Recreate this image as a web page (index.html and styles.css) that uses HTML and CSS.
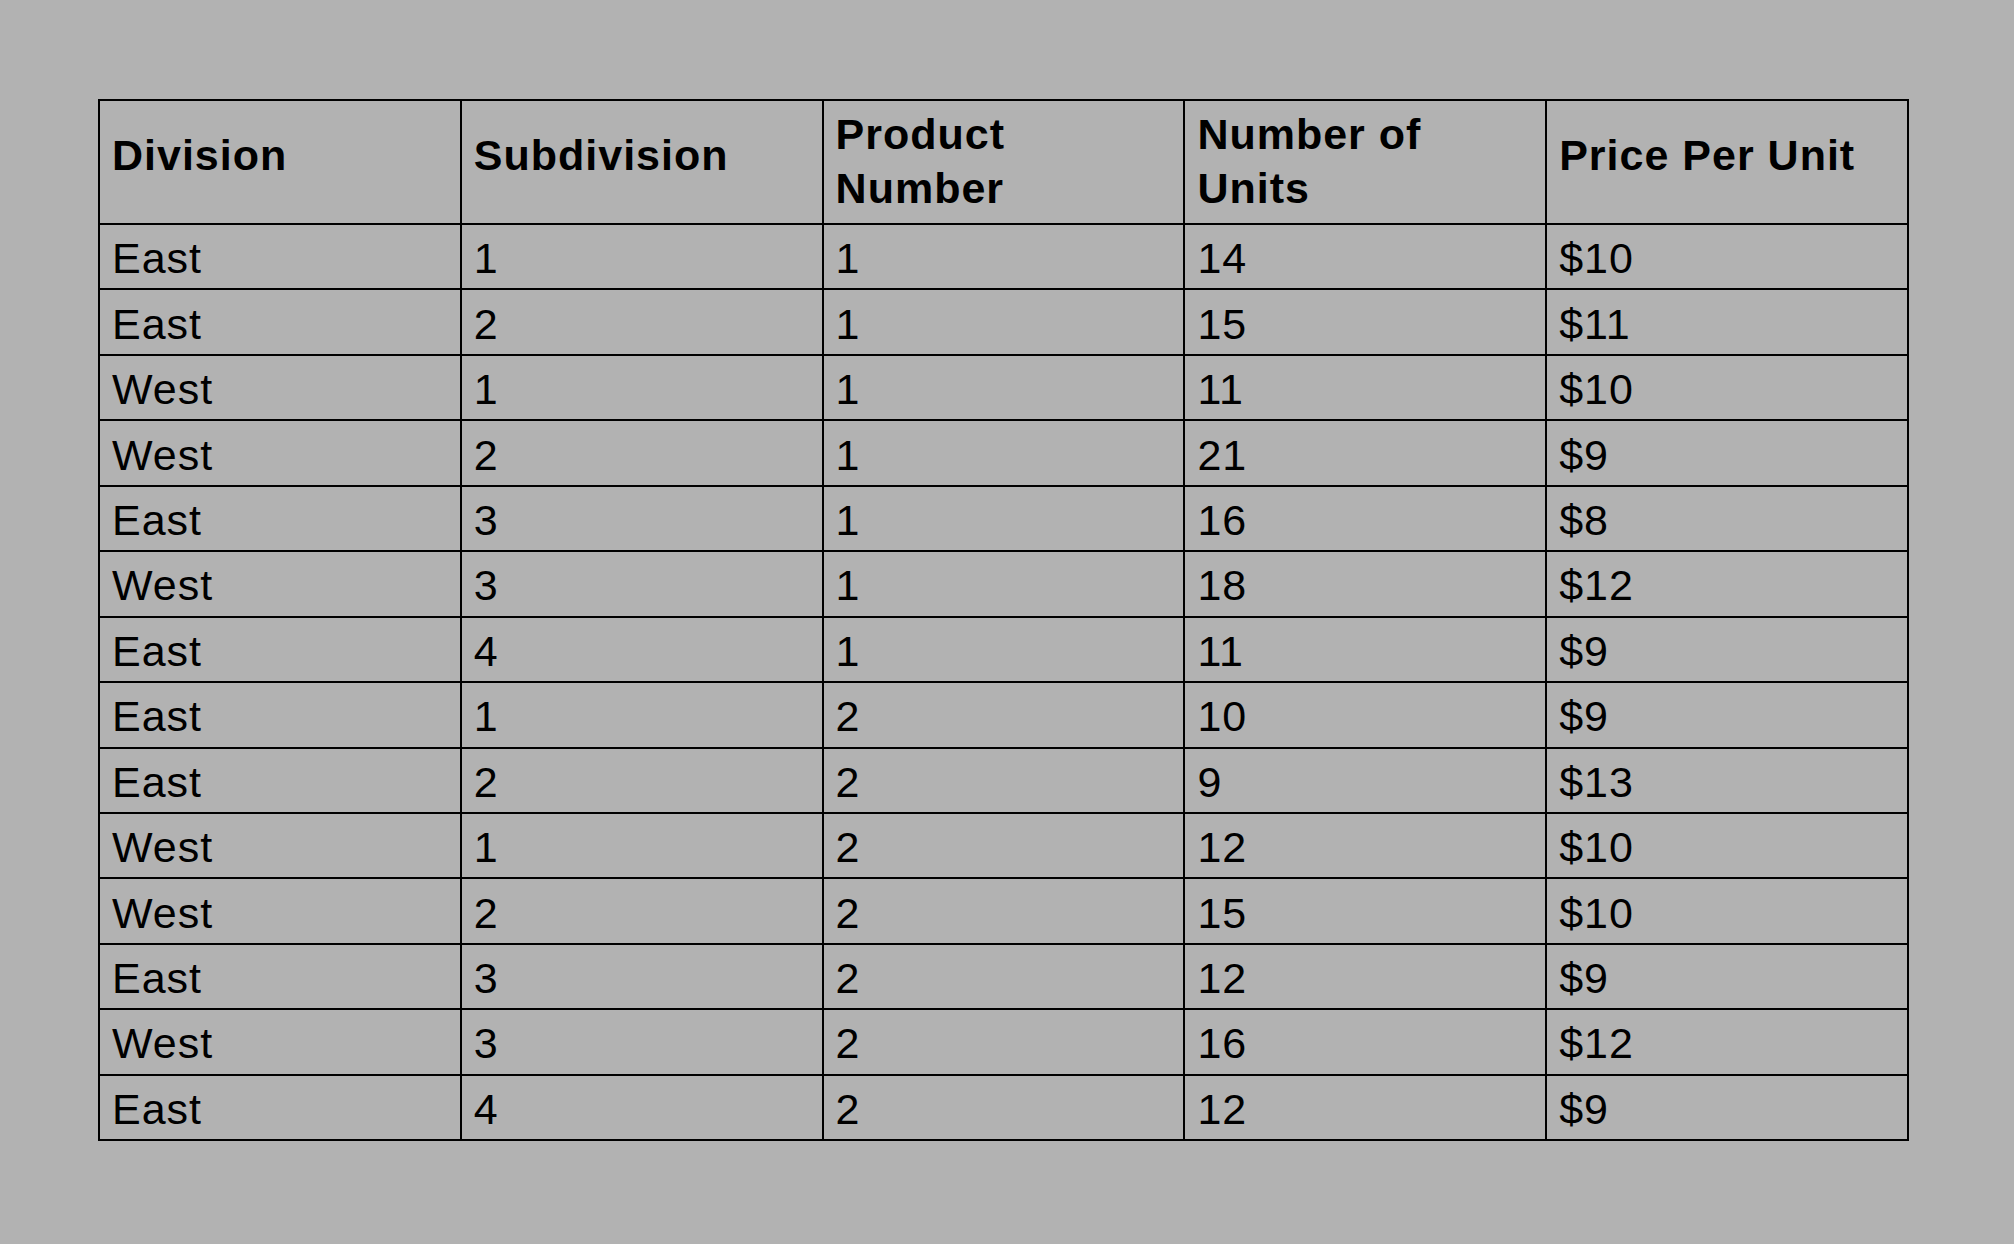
FILE: index.html
```html
<!DOCTYPE html>
<html lang="en">
<head>
<meta charset="utf-8">
<title>Sales Table</title>
<link rel="stylesheet" href="styles.css">
</head>
<body>
<main class="page">
<table class="sales">
  <colgroup>
    <col class="c"><col class="c"><col class="c"><col class="c"><col class="c">
  </colgroup>
  <thead>
    <tr class="head-row">
      <th class="single">Division</th>
      <th class="single">Subdivision</th>
      <th class="double">Product<br>Number</th>
      <th class="double">Number of<br>Units</th>
      <th class="single">Price Per Unit</th>
    </tr>
  </thead>
  <tbody>
    <tr><td>East</td><td>1</td><td>1</td><td>14</td><td>$10</td></tr>
    <tr><td>East</td><td>2</td><td>1</td><td>15</td><td>$11</td></tr>
    <tr><td>West</td><td>1</td><td>1</td><td>11</td><td>$10</td></tr>
    <tr><td>West</td><td>2</td><td>1</td><td>21</td><td>$9</td></tr>
    <tr><td>East</td><td>3</td><td>1</td><td>16</td><td>$8</td></tr>
    <tr><td>West</td><td>3</td><td>1</td><td>18</td><td>$12</td></tr>
    <tr><td>East</td><td>4</td><td>1</td><td>11</td><td>$9</td></tr>
    <tr><td>East</td><td>1</td><td>2</td><td>10</td><td>$9</td></tr>
    <tr><td>East</td><td>2</td><td>2</td><td>9</td><td>$13</td></tr>
    <tr><td>West</td><td>1</td><td>2</td><td>12</td><td>$10</td></tr>
    <tr><td>West</td><td>2</td><td>2</td><td>15</td><td>$10</td></tr>
    <tr><td>East</td><td>3</td><td>2</td><td>12</td><td>$9</td></tr>
    <tr><td>West</td><td>3</td><td>2</td><td>16</td><td>$12</td></tr>
    <tr><td>East</td><td>4</td><td>2</td><td>12</td><td>$9</td></tr>
  </tbody>
</table>
</main>
</body>
</html>
```
FILE: styles.css
```css
html, body {
  margin: 0;
  padding: 0;
  background: #b2b2b2;
}

body {
  font-family: "Liberation Sans", Arial, sans-serif;
  color: #000;
}

.page {
  padding: 99px 0 0 98px;
}

.sales {
  border-collapse: collapse;
  table-layout: fixed;
  width: 1811px;
  font-size: 43px;
  letter-spacing: 1px;
}

.sales th,
.sales td {
  border: 2px solid #000;
  padding: 0 8px 0 12px;
  text-align: left;
  overflow: hidden;
  white-space: nowrap;
}

.head-row {
  height: 124px;
}

.sales th {
  font-weight: bold;
  line-height: 54px;
  vertical-align: top;
}

.sales th.double {
  padding-top: 6px;
}

.sales th.single {
  padding-top: 27px;
}

.sales tbody tr {
  height: 65.45px;
}

.sales td {
  vertical-align: middle;
  line-height: 48px;
  padding-top: 3px;
  font-weight: normal;
}
```
